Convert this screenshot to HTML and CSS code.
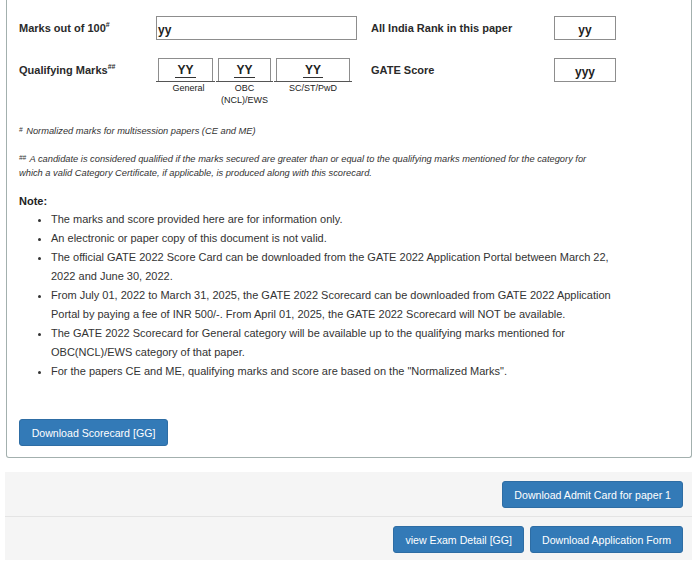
FILE: index.html
```html
<!DOCTYPE html>
<html>
<head>
<meta charset="utf-8">
<link rel="stylesheet" href="styles.css">
</head>
<body>
<div class="card">
  <div class="row row1">
    <div class="label">Marks out of 100<sup>#</sup></div>
    <div class="box wide">yy</div>
    <div class="label label2">All India Rank in this paper</div>
    <div class="box small">yy</div>
  </div>
  <div class="row row2">
    <div class="label">Qualifying Marks<sup>##</sup></div>
    <div class="qual">
      <div class="qcol q1"><div class="qbox"><span>YY</span></div><div class="qlab">General</div></div>
      <div class="qcol q2"><div class="qbox"><span>YY</span></div><div class="qlab">OBC<br>(NCL)/EWS</div></div>
      <div class="qcol q3"><div class="qbox"><span>YY</span></div><div class="qlab">SC/ST/PwD</div></div>
    </div>
    <div class="label label2 gs">GATE Score</div>
    <div class="box small">yyy</div>
  </div>
  <p class="foot f1"><sup class="mark">#</sup> Normalized marks for multisession papers (CE and ME)</p>
  <p class="foot f2"><sup class="mark">##</sup> A candidate is considered qualified if the marks secured are greater than or equal to the qualifying marks mentioned for the category for which a valid Category Certificate, if applicable, is produced along with this scorecard.</p>
  <div class="note">Note:</div>
  <ul class="notes">
    <li>The marks and score provided here are for information only.</li>
    <li>An electronic or paper copy of this document is not valid.</li>
    <li>The official GATE 2022 Score Card can be downloaded from the GATE 2022 Application Portal between March 22, 2022 and June 30, 2022.</li>
    <li>From July 01, 2022 to March 31, 2025, the GATE 2022 Scorecard can be downloaded from GATE 2022 Application Portal by paying a fee of INR 500/-. From April 01, 2025, the GATE 2022 Scorecard will NOT be available.</li>
    <li>The GATE 2022 Scorecard for General category will be available up to the qualifying marks mentioned for OBC(NCL)/EWS category of that paper.</li>
    <li>For the papers CE and ME, qualifying marks and score are based on the "Normalized Marks".</li>
  </ul>
  <button class="btn scorebtn">Download Scorecard [GG]</button>
</div>
<div class="panel">
  <div class="prow">
    <button class="btn">Download Admit Card for paper 1</button>
  </div>
  <div class="prow">
    <button class="btn">view Exam Detail [GG]</button>
    <button class="btn">Download Application Form</button>
  </div>
</div>
</body>
</html>
```
FILE: styles.css
```css
html, body {
  margin: 0;
  padding: 0;
  background: #fff;
  font-family: "Liberation Sans", Arial, sans-serif;
  color: #222;
}
.card {
  margin-left: 6px;
  width: 686px;
  border: 1px solid #a3b0ae;
  border-top: none;
  border-radius: 0 0 3px 3px;
  padding: 16px 0 11px 0;
  box-sizing: border-box;
}
.row {
  display: flex;
  align-items: flex-start;
  padding-left: 12px;
}
.row1 {
  height: 42px;
}
.row2 {
  height: 56px;
}
.label {
  width: 137px;
  font-weight: bold;
  font-size: 11px;
  line-height: 24px;
  color: #2a2a2a;
}
.label sup {
  font-size: 7px;
  vertical-align: 5px;
  line-height: 0;
}
.box {
  height: 24px;
  border: 1px solid #8d8d8d;
  box-sizing: border-box;
  font-weight: bold;
  font-size: 12px;
  line-height: 24px;
  padding-top: 1px;
}
.wide {
  width: 201px;
  padding-left: 1px;
}
.label2 {
  width: 183px;
  margin-left: 14px;
}
.gs {
  margin-left: 21px;
  width: 183px;
}
.small {
  width: 62px;
  text-align: center;
}
.qual {
  display: flex;
  margin-left: 2px;
  gap: 5px;
}
.qcol {
  display: flex;
  flex-direction: column;
  align-items: center;
}
.q1 { width: 55px; }
.q2 { width: 53px; }
.q3 { width: 74px; }
.qbox {
  width: 100%;
  height: 24px;
  border: 1px solid #8d8d8d;
  border-bottom: none;
  box-sizing: border-box;
  text-align: center;
  position: relative;
}
.qbox span {
  display: inline-block;
  font-weight: bold;
  font-size: 12px;
  line-height: 12px;
  margin-top: 5px;
  padding: 0 2px 1px;
  border-bottom: 1.5px solid #333;
}
.qbox::after {
  content: "";
  position: absolute;
  left: 0;
  right: 0;
  bottom: 0;
  height: 1px;
  background: #555;
  margin: 0 -3px;
}
.qlab {
  font-size: 9px;
  line-height: 12px;
  text-align: center;
  color: #222;
  margin-top: 0;
  white-space: nowrap;
}
.q1 .qlab { margin-left: 6px; }
.foot {
  margin: 0;
  padding-left: 12px;
  font-style: italic;
  font-size: 9.3px;
  line-height: 14px;
  color: #333;
  width: 590px;
}
.mark {
  font-size: 6.5px;
  vertical-align: 2px;
  line-height: 0;
  margin-right: 1px;
}
.f1 {
  margin-top: 10px;
}
.f2 {
  margin-top: 14px;
}
.note {
  margin-top: 14px;
  padding-left: 12px;
  font-weight: bold;
  font-size: 11px;
  line-height: 14px;
}
.notes {
  margin: 2px 0 0 0;
  padding-left: 44px;
  width: 570px;
  font-size: 11px;
  line-height: 19px;
  color: #333;
}
.btn {
  background: #337ab7;
  color: #fff;
  border: 1px solid #2e6da4;
  border-radius: 3px;
  font-family: "Liberation Sans", Arial, sans-serif;
  font-size: 10.6px;
  height: 27px;
  padding: 0 11px;
  white-space: nowrap;
  cursor: pointer;
}
.scorebtn {
  margin-top: 38px;
  margin-left: 12px;
  width: 149px;
  padding: 0;
}
.panel {
  margin-top: 14px;
  margin-left: 5px;
  width: 687px;
  background: #f5f5f5;
}
.prow {
  display: flex;
  justify-content: flex-end;
  gap: 6px;
  padding: 9px 9px 8px 0;
}
.prow + .prow {
  border-top: 1px solid #e4e4e4;
  padding-bottom: 7px;
}
```
